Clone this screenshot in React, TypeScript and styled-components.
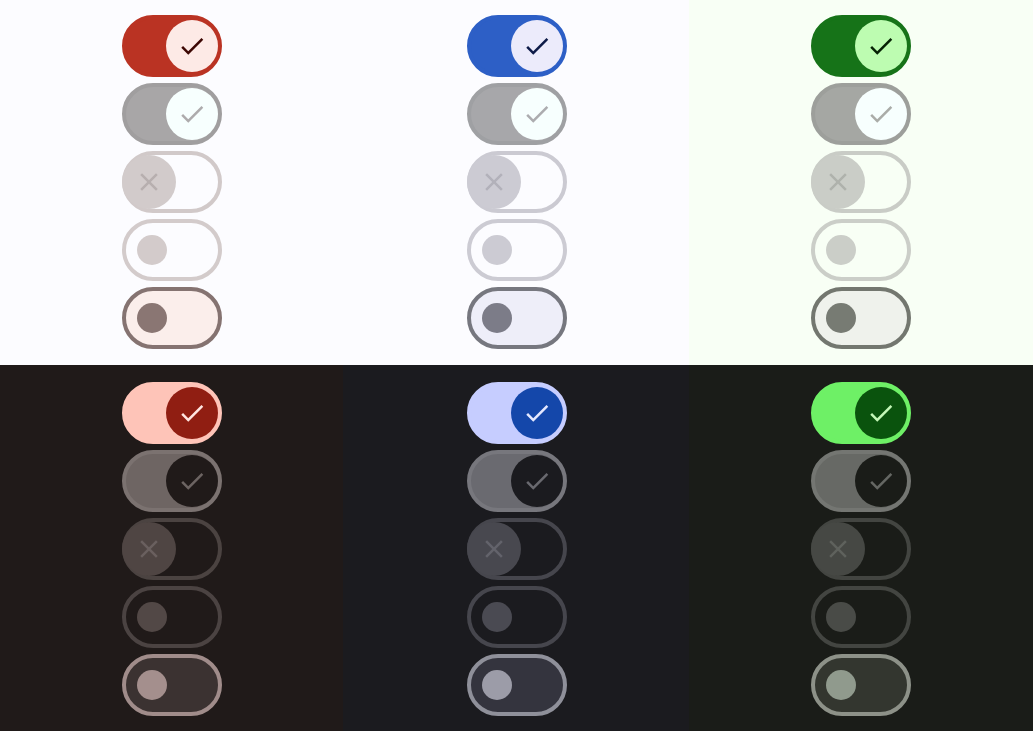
import styled, { createGlobalStyle } from 'styled-components'

interface IPalette {
  bg: string,
  onTrack: string,
  onThumb: string,
  onIcon: string,
  disOnTrack: string,
  disOnBorder: string,
  disOnThumb: string,
  disOnIcon: string,
  disOffBorder: string,
  disOffThumb: string,
  disOffIcon: string,
  plainBorder: string,
  plainThumb: string,
  offBorder: string,
  offFill: string,
  offThumb: string
}

const palettes: IPalette[] = [
  {
    bg: '#fcfcff', onTrack: '#ba3323', onThumb: '#fdeae6', onIcon: '#3d0703',
    disOnTrack: '#a8a6a7', disOnBorder: '#a09e9f', disOnThumb: '#f7fffe', disOnIcon: '#adabac',
    disOffBorder: '#d1c9c9', disOffThumb: '#d2cbcb', disOffIcon: '#b7afaf',
    plainBorder: '#d3cbcb', plainThumb: '#d3cbcb',
    offBorder: '#857371', offFill: '#fbeeeb', offThumb: '#8a7673'
  },
  {
    bg: '#fcfcff', onTrack: '#2d5fc6', onThumb: '#ecebfb', onIcon: '#0e1b48',
    disOnTrack: '#a7a7aa', disOnBorder: '#9fa0a3', disOnThumb: '#f7fffe', disOnIcon: '#acacaf',
    disOffBorder: '#cbcad2', disOffThumb: '#cccbd3', disOffIcon: '#b2b1ba',
    plainBorder: '#cccbd3', plainThumb: '#cccbd3',
    offBorder: '#76777f', offFill: '#eeeef9', offThumb: '#7c7c88'
  },
  {
    bg: '#f8fff5', onTrack: '#167318', onThumb: '#bdfcb1', onIcon: '#062104',
    disOnTrack: '#a5a7a3', disOnBorder: '#9d9f9b', disOnThumb: '#f7fffe', disOnIcon: '#aaaca8',
    disOffBorder: '#c9ccc6', disOffThumb: '#cacdc7', disOffIcon: '#afb2ac',
    plainBorder: '#cbcec8', plainThumb: '#cbcec8',
    offBorder: '#73776f', offFill: '#eff2ec', offThumb: '#777b73'
  },
  {
    bg: '#201a19', onTrack: '#fec4b8', onThumb: '#901e12', onIcon: '#ffe6e1',
    disOnTrack: '#6e6563', disOnBorder: '#7b7270', disOnThumb: '#201a19', disOnIcon: '#6c6462',
    disOffBorder: '#4b4341', disOffThumb: '#4f4543', disOffIcon: '#6a605f',
    plainBorder: '#4b4342', plainThumb: '#524846',
    offBorder: '#a08c8a', offFill: '#3b3231', offThumb: '#a48f8d'
  },
  {
    bg: '#1b1b1f', onTrack: '#c6cdff', onThumb: '#1447aa', onIcon: '#e4e8ff',
    disOnTrack: '#6a6a70', disOnBorder: '#77777d', disOnThumb: '#1b1b1f', disOnIcon: '#69696f',
    disOffBorder: '#46464d', disOffThumb: '#48484f', disOffIcon: '#63636b',
    plainBorder: '#46464d', plainThumb: '#4a4a52',
    offBorder: '#8f909a', offFill: '#34343e', offThumb: '#9c9ca8'
  },
  {
    bg: '#1a1c18', onTrack: '#6ef066', onThumb: '#0a530d', onIcon: '#c4f8b8',
    disOnTrack: '#676965', disOnBorder: '#747672', disOnThumb: '#1a1c18', disOnIcon: '#656763',
    disOffBorder: '#434541', disOffThumb: '#464844', disOffIcon: '#5f625d',
    plainBorder: '#434541', plainThumb: '#494b47',
    offBorder: '#8d9188', offFill: '#33362f', offThumb: '#909a8d'
  }
]

const CheckIcon = ({ color }: { color: string }) => (
  <svg width="30" height="30" viewBox="0 0 24 24">
    <path fill={color} d="M9 16.17L4.83 12l-1.42 1.41L9 19 21 7l-1.41-1.41z" />
  </svg>
)

const CloseIcon = ({ color }: { color: string }) => (
  <svg width="30" height="30" viewBox="0 0 24 24">
    <path fill={color} d="M19 6.41L17.59 5 12 10.59 6.41 5 5 6.41 10.59 12 5 17.59 6.41 19 12 13.41 17.59 19 19 17.59 13.41 12z" />
  </svg>
)

function Panel({ p, index }: { p: IPalette, index: number }) {
  return (
    <Cell $bg={p.bg} $top={index < 3 ? 15 : 17} $shift={index % 3 === 1 ? 2 : 0}>
      <Track $fill={p.onTrack} $border={p.onTrack} $end>
        <Thumb $size={52} $color={p.onThumb} $gap={0}>
          <CheckIcon color={p.onIcon} />
        </Thumb>
      </Track>
      <Track $fill={p.disOnTrack} $border={p.disOnBorder} $end>
        <Thumb $size={52} $color={p.disOnThumb} $gap={0}>
          <CheckIcon color={p.disOnIcon} />
        </Thumb>
      </Track>
      <Track $fill="transparent" $border={p.disOffBorder}>
        <Thumb $size={54} $color={p.disOffThumb} $gap={-4}>
          <CloseIcon color={p.disOffIcon} />
        </Thumb>
      </Track>
      <Track $fill="transparent" $border={p.plainBorder}>
        <Thumb $size={30} $color={p.plainThumb} $gap={11} />
      </Track>
      <Track $fill={p.offFill} $border={p.offBorder}>
        <Thumb $size={30} $color={p.offThumb} $gap={11} />
      </Track>
    </Cell>
  )
}

function App() {
  return (
    <>
      <GlobalStyle />
      <Grid>
        {palettes.map((p, i) => <Panel key={i} p={p} index={i} />)}
      </Grid>
    </>
  )
}

const GlobalStyle = createGlobalStyle`
  * { box-sizing: border-box; }
  html, body {
    margin: 0;
    padding: 0;
    font-family: Roboto, "Liberation Sans", sans-serif;
  }
`
const Grid = styled.div`
  width: 100vw;
  height: 100vh;
  display: grid;
  grid-template-columns: 343px 346px 1fr;
  grid-template-rows: 365px 1fr;
`
const Cell = styled.div<{ $bg: string, $top: number, $shift: number }>`
  background-color: ${p => p.$bg};
  display: flex;
  flex-direction: column;
  align-items: center;
  gap: 6px;
  padding-top: ${p => p.$top}px;
  padding-left: ${p => p.$shift}px;
`
const Track = styled.div<{ $fill: string, $border: string, $end?: boolean }>`
  width: 100px;
  height: 62px;
  border-radius: 31px;
  border: 4px solid ${p => p.$border};
  background-color: ${p => p.$fill};
  display: flex;
  align-items: center;
  justify-content: ${p => p.$end ? 'flex-end' : 'flex-start'};
`
const Thumb = styled.div<{ $size: number, $color: string, $gap: number }>`
  flex: none;
  width: ${p => p.$size}px;
  height: ${p => p.$size}px;
  border-radius: 50%;
  background-color: ${p => p.$color};
  margin: 0 ${p => p.$gap}px;
  display: flex;
  align-items: center;
  justify-content: center;
`

export default App
